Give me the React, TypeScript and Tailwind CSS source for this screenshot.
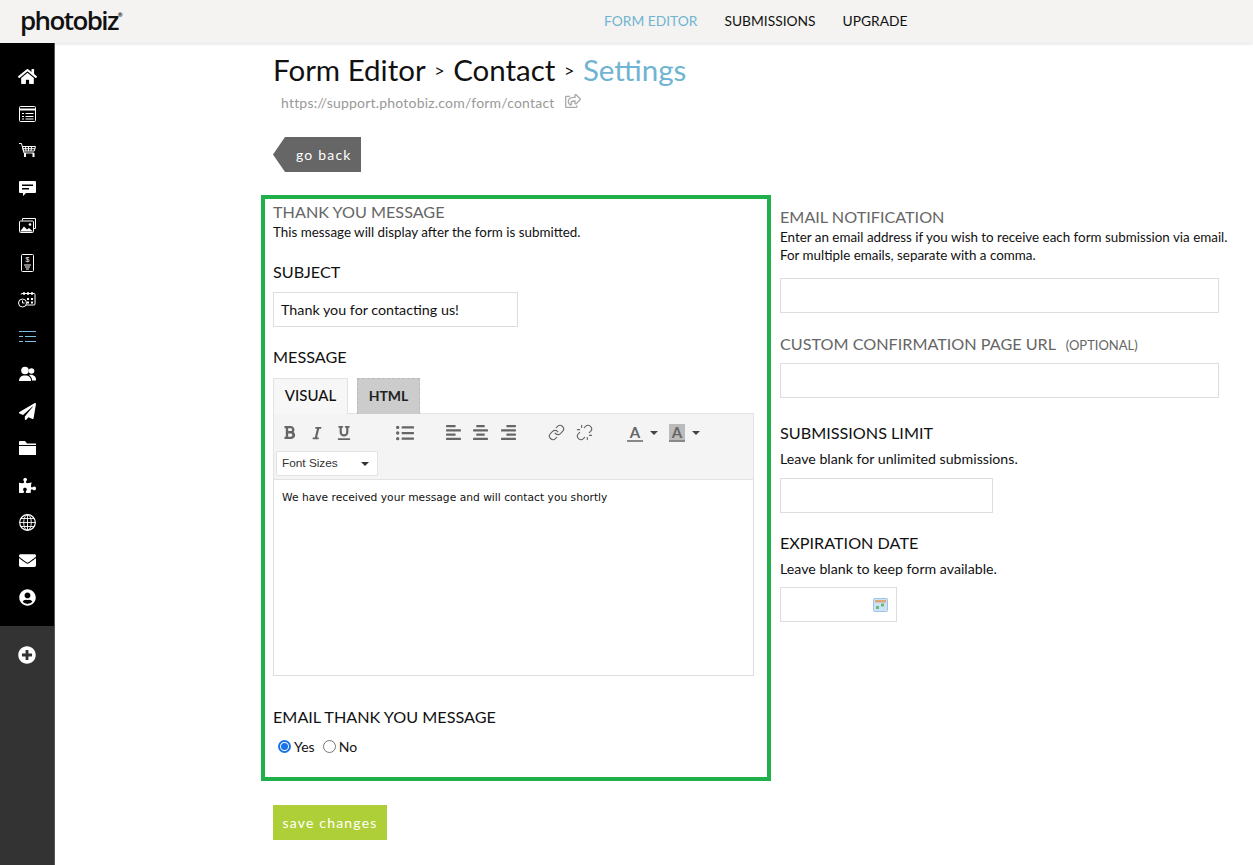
import { FaAlignCenter, FaAlignLeft, FaAlignRight, FaBold, FaEnvelope, FaHome, FaItalic, FaListUl, FaPaperPlane, FaPlusCircle, FaPuzzlePiece, FaRegShareSquare, FaUnderline, FaUserCircle } from 'react-icons/fa'
import { Link, Unlink } from 'lucide-react'
import type { ReactNode } from 'react'

const FormIcon = () => (
  <svg width="17" height="16" viewBox="0 0 17 16" fill="none" stroke="white">
    <rect x="0.5" y="0.5" width="16" height="15" rx="1" />
    <path d="M1 3.5h15" strokeWidth="2" />
    <path d="M3 7.500h2M6.500 7.500h8M3 10.500h2M6.500 10.500h8M3 13h2M6.500 13h8" />
  </svg>
)

const CartIcon = () => (
  <svg width="17" height="15" viewBox="0 0 17 15" fill="none" stroke="white">
    <path d="M0 .5h2.500l2.500 9.500h10" />
    <path d="M3.500 3.500h13l-1.200 4.500H4.500z" />
    <path d="M6.500 3.500l.5 4.500M9.500 3.500v4.500M12.500 3.500l-.5 4.500M4 5.700h12" />
    <path d="M6 10v4M14.500 10v4" strokeWidth="2" />
  </svg>
)

const CommentIcon = () => (
  <svg width="17" height="15" viewBox="0 0 17 15" fill="white">
    <path d="M1 0h15a1 1 0 0 1 1 1v10a1 1 0 0 1-1 1H7l-3 3v-3H1a1 1 0 0 1-1-1V1a1 1 0 0 1 1-1z" />
    <path d="M3 3.500h11v1.500H3zM3 7h7v1.500H3z" fill="black" />
  </svg>
)

const GalleryIcon = () => (
  <svg width="17" height="15" viewBox="0 0 17 15" fill="none" stroke="white">
    <path d="M3.500 2.500V.5h13v10h-2" />
    <rect x="0.5" y="3" width="14" height="11.5" rx="1" fill="black" />
    <path d="M1 13.500l4-5 3 3 2-1.500 4 3.500z" fill="white" stroke="none" />
    <circle cx="11" cy="6.500" r="1.300" fill="white" stroke="none" />
  </svg>
)

const InvoiceIcon = () => (
  <svg width="13" height="18" viewBox="0 0 13 18" fill="none" stroke="white">
    <rect x="0.5" y="0.5" width="12" height="17" rx="1" />
    <text x="6.500" y="8" fontSize="7" fill="white" stroke="none" textAnchor="middle" fontFamily="Liberation Sans, sans-serif">$</text>
    <path d="M3 11h7M4 13h5M5 15h3" />
  </svg>
)

const CalendarIcon = () => (
  <svg width="18" height="17" viewBox="0 0 18 17" fill="none" stroke="white">
    <path d="M3 3.500a1 1 0 0 1 1-1h12a1 1 0 0 1 1 1V13a1 1 0 0 1-1 1H8" />
    <path d="M6 1v3M10 1v3M14 1v3" strokeWidth="1.500" />
    <path d="M9 7h2v2H9zM13 7h2v2h-2zM9 10.500h2v2H9zM13 10.500h2v2h-2z" fill="white" stroke="none" />
    <circle cx="4.500" cy="12" r="4" fill="black" />
    <path d="M4.500 9.500V12h2" />
  </svg>
)

const ListIcon = () => (
  <svg width="17" height="12" viewBox="0 0 17 12" fill="none" stroke="#7cc0de">
    <path d="M0 .5h17M0 5.500h4M6 5.500h11M0 10.500h4M6 10.500h11" />
  </svg>
)

const PeopleIcon = () => (
  <svg width="17" height="16" viewBox="0 0 17 16" fill="white">
    <circle cx="6" cy="4.500" r="3.800" />
    <circle cx="12.500" cy="5" r="2.800" />
    <path d="M0 15c0-3.500 2-5.500 6-5.500s6 2 6 5.500z" />
    <path d="M10 9c3 -.8 7 .5 7 4.500v1h-4c0-2.500-1-4-3-5.500z" />
  </svg>
)

const FolderIcon = () => (
  <svg width="17" height="14" viewBox="0 0 17 14" fill="white">
    <path d="M0 1a1 1 0 0 1 1-1h5l2 2.500h9V4H0z" />
    <path d="M0 5h17v9H0z" />
  </svg>
)

const GlobeIcon = () => (
  <svg width="17" height="17" viewBox="0 0 17 17" fill="none" stroke="white" strokeWidth="0.900">
    <circle cx="8.500" cy="8.500" r="7.800" strokeWidth="1.200" />
    <ellipse cx="8.500" cy="8.500" rx="3.800" ry="7.800" />
    <path d="M8.500 .5v16M.7 8.500h15.600M1.800 4.500h13.400M1.800 12.500h13.400" />
  </svg>
)

const navIcons: ReactNode[] = [
  <FaHome size={19} />,
  <FormIcon />,
  <CartIcon />,
  <CommentIcon />,
  <GalleryIcon />,
  <InvoiceIcon />,
  <CalendarIcon />,
  <ListIcon />,
  <PeopleIcon />,
  <FaPaperPlane size={17} />,
  <FolderIcon />,
  <FaPuzzlePiece size={17} />,
  <GlobeIcon />,
  <FaEnvelope size={17} />,
  <FaUserCircle size={17} />,
]

function Sidebar() {
  return (
    <aside className="w-[55px] shrink-0 flex flex-col bg-black text-white border-r border-[#555]">
      <nav className="h-[583px] pt-[15px] flex flex-col">
        {navIcons.map((icon, i) => (
          <div key={i} className="h-[37.2px] shrink-0 flex items-center justify-center">
            {icon}
          </div>
        ))}
      </nav>
      <div className="flex-1 bg-[#333] pt-[20px] flex justify-center">
        <FaPlusCircle size={18} />
      </div>
    </aside>
  )
}

function Header() {
  return (
    <header className="relative z-10 h-[43px] shrink-0 flex items-center bg-[#f4f3f1] shadow-[0_1px_3px_rgba(0,0,0,0.12)]">
      <div className="ml-[20px] w-[584px] flex items-start">
        <span className="font-['Open_Sans',sans-serif] text-[26px] font-semibold leading-none tracking-[-1.6px] text-[#111] -mt-[3px]">photobiz</span>
        <span className="text-[6px] text-[#111] font-bold">®</span>
      </div>
      <nav className="flex gap-[27px] text-[13.8px] text-[#111] -mt-[1px]">
        <span className="text-[#6fb4d2]">FORM EDITOR</span>
        <span>SUBMISSIONS</span>
        <span>UPGRADE</span>
      </nav>
    </header>
  )
}

function Label({ children, gray }: { children: ReactNode; gray?: boolean }) {
  return <h3 className={`text-[16.2px] leading-[20px] font-normal whitespace-nowrap ${gray ? 'text-[#666]' : 'text-[#111]'}`}>{children}</h3>
}

function Toolbar() {
  return (
    <div className="h-[67px] bg-[#f4f4f4] border border-[#e2e2e2] text-[#666]">
      <div className="h-[37px] flex items-center pl-[8px]">
        <FaBold size={15} />
        <FaItalic size={14} className="ml-[13px]" />
        <FaUnderline size={14} className="ml-[13px]" />
        <FaListUl size={18} className="ml-[45px]" />
        <FaAlignLeft size={17} className="ml-[31px]" />
        <FaAlignCenter size={17} className="ml-[10px]" />
        <FaAlignRight size={17} className="ml-[11px]" />
        <Link size={17} strokeWidth={1.600} className="ml-[31px]" />
        <Unlink size={17} strokeWidth={1.600} className="ml-[11px]" />
        <span className="ml-[34px] w-[16px] text-center font-bold text-[15px] leading-[16px] border-b-2 border-[#888]">A</span>
        <span className="ml-[7px] border-x-4 border-t-4 border-x-transparent border-t-[#444]" />
        <span className="ml-[11px] w-[16px] text-center font-bold text-[15px] leading-[16px] bg-[#bbb] border-b-2 border-[#888]">A</span>
        <span className="ml-[7px] border-x-4 border-t-4 border-x-transparent border-t-[#444]" />
      </div>
      <div className="ml-[2px] w-[102px] h-[25px] flex items-center justify-between pl-[5px] pr-[8px] bg-white border border-[#e2e2e2] rounded-[2px]">
        <span className="font-['Liberation_Sans',sans-serif] text-[11.8px] text-[#333]">Font Sizes</span>
        <span className="border-x-4 border-t-4 border-x-transparent border-t-[#333]" />
      </div>
    </div>
  )
}

function ThankYouPanel() {
  return (
    <section className="w-[510px] h-[586px] border-4 border-[#1fb04c] pl-[8px] pr-[13px] pt-[3px]">
      <Label gray>THANK YOU MESSAGE</Label>
      <p className="text-[13.4px] leading-[20px] text-[#111]">This message will display after the form is submitted.</p>
      <div className="mt-[20px]"><Label>SUBJECT</Label></div>
      <div className="mt-[10px] w-[245px] h-[35px] flex items-center px-[7px] border border-[#ddd] text-[14.3px] text-[#111]">Thank you for contacting us!</div>
      <div className="mt-[20px]"><Label>MESSAGE</Label></div>
      <div className="mt-[11px] flex gap-[9px] -mb-px relative">
        <div className="w-[75px] h-[36px] pb-[2px] flex items-center justify-center bg-[#f7f7f7] border border-b-0 border-[#e2e2e2] text-[15px] font-medium text-[#111]">VISUAL</div>
        <div className="w-[63px] h-[36px] pb-[2px] flex items-center justify-center bg-[#ccc] border border-b-0 border-dashed border-[#bbb] text-[14px] font-bold text-[#222]">HTML</div>
      </div>
      <Toolbar />
      <div className="h-[196px] border border-t-0 border-[#ddd] px-[8px] pt-[11px] font-['DejaVu_Sans','Open_Sans',sans-serif] text-[10.7px] leading-[14px] text-[#111]">
        We have received your message and will contact you shortly
      </div>
      <div className="mt-[31px]"><Label>EMAIL THANK YOU MESSAGE</Label></div>
      <div className="mt-[9px] ml-[5px] flex items-center h-[20px] text-[14px] text-[#111]">
        <span className="w-[13px] h-[13px] rounded-full border-2 border-[#1a73e8] flex items-center justify-center">
          <span className="w-[7px] h-[7px] rounded-full bg-[#1a73e8]" />
        </span>
        <span className="ml-[3px]">Yes</span>
        <span className="ml-[8px] w-[13px] h-[13px] rounded-full border border-[#777]" />
        <span className="ml-[3px]">No</span>
      </div>
    </section>
  )
}

function SettingsColumn() {
  return (
    <div className="ml-[9px] w-[448px] pt-[12px]">
      <Label gray>EMAIL NOTIFICATION</Label>
      <p className="mt-[1px] text-[13.4px] leading-[18px] text-[#111] whitespace-nowrap">
        Enter an email address if you wish to receive each form submission via email.<br />
        For multiple emails, separate with a comma.
      </p>
      <div className="mt-[14px] w-[439px] h-[35px] border border-[#ddd]" />
      <div className="mt-[21px]">
        <Label gray>CUSTOM CONFIRMATION PAGE URL <span className="ml-[6px] text-[13px]">(OPTIONAL)</span></Label>
      </div>
      <div className="mt-[8px] w-[439px] h-[35px] border border-[#ddd]" />
      <div className="mt-[25px]"><Label>SUBMISSIONS LIMIT</Label></div>
      <p className="mt-[6px] text-[14.2px] leading-[20px] text-[#111]">Leave blank for unlimited submissions.</p>
      <div className="mt-[9px] w-[213px] h-[35px] border border-[#ddd]" />
      <div className="mt-[20px]"><Label>EXPIRATION DATE</Label></div>
      <p className="mt-[6px] text-[14.2px] leading-[20px] text-[#111]">Leave blank to keep form available.</p>
      <div className="mt-[8px] w-[117px] h-[35px] border border-[#ddd] flex items-center justify-end pr-[8px]">
        <svg width="15" height="14" viewBox="0 0 15 14">
          <rect x="0.500" y="0.500" width="14" height="13" rx="1" fill="#cfe3f6" stroke="#9fc3e6" />
          <rect x="2" y="2" width="11" height="2.500" fill="#d9a878" />
          <rect x="3" y="8" width="3" height="3" fill="#6cb87a" />
          <rect x="8" y="5.500" width="3" height="3" fill="#6cb87a" />
        </svg>
      </div>
    </div>
  )
}

export default function App() {
  return (
    <div className="h-screen flex flex-col overflow-hidden bg-white font-['Lato',sans-serif]">
      <Header />
      <div className="flex-1 flex min-h-0">
        <Sidebar />
        <main className="flex-1 pl-[206px]">
          <div className="ml-[12px]">
            <h1 className="mt-[8px] flex items-center h-[38px] text-[29.5px] font-normal text-[#111] whitespace-nowrap">
              Form Editor
              <span className="mx-[8.5px] text-[18px]">&gt;</span>
              Contact
              <span className="mx-[8.5px] text-[18px]">&gt;</span>
              <span className="text-[#6fb4d2]">Settings</span>
            </h1>
            <div className="mt-[3px] ml-[8px] flex items-center gap-[10px] h-[20px] text-[14px] tracking-[0.2px] text-[#999]">
              https://support.photobiz.com/form/contact
              <FaRegShareSquare size={16} className="-mt-[3px] text-[#aaa]" />
            </div>
            <button className="mt-[25px] w-[88px] h-[35px] pl-[23px] text-left bg-[#666] text-white text-[14px] tracking-[1.2px] [clip-path:polygon(12px_0,100%_0,100%_100%,12px_100%,0_50%)]">
              go back
            </button>
          </div>
          <div className="mt-[23px] flex items-start">
            <ThankYouPanel />
            <SettingsColumn />
          </div>
          <button className="ml-[12px] mt-[24px] w-[114px] h-[35px] bg-[#aecf37] text-white text-[14px] tracking-[1.2px]">
            save changes
          </button>
        </main>
      </div>
    </div>
  )
}
